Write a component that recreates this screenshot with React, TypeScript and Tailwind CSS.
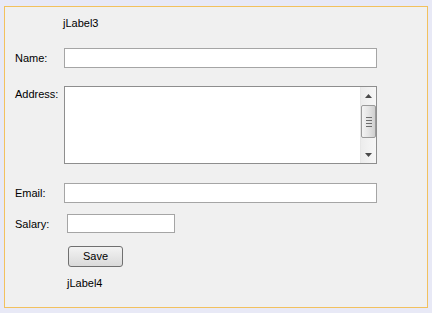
const font = { fontFamily: '"Liberation Sans", Arial, sans-serif' }

const FieldLabel = ({ text, className = '' }: { text: string; className?: string }) => (
  <span className={`w-[49px] shrink-0 text-[11px] leading-[14px] text-black ${className}`}>{text}</span>
)

const Scrollbar = () => (
  <div className="flex h-full w-[16px] shrink-0 flex-col border-l border-[#e6e6e6] bg-gradient-to-r from-[#ececec] to-[#f7f7f7]">
    <div className="flex h-[17px] items-center justify-center">
      <svg width="7" height="4" viewBox="0 0 7 4"><path d="M0 4 L3.5 0 L7 4 Z" fill="#4a4a4a" /></svg>
    </div>
    <div className="mt-[1px] flex h-[33px] flex-col items-center justify-center gap-[2px] rounded-[2px] border border-[#9a9a9a] bg-gradient-to-r from-[#f4f4f4] via-[#e4e4e4] to-[#cfcfcf]">
      <div className="h-px w-[6px] bg-[#6e6e6e]" />
      <div className="h-px w-[6px] bg-[#6e6e6e]" />
      <div className="h-px w-[6px] bg-[#6e6e6e]" />
      <div className="h-px w-[6px] bg-[#6e6e6e]" />
    </div>
    <div className="flex-1" />
    <div className="flex h-[17px] items-center justify-center">
      <svg width="7" height="4" viewBox="0 0 7 4"><path d="M0 0 L7 0 L3.5 4 Z" fill="#4a4a4a" /></svg>
    </div>
  </div>
)

export default function App() {
  return (
    <div className="h-[313px] w-[432px] bg-[#e8e9f6] pl-[4px] pt-[6px]" style={font}>
      <div className="flex h-[302px] w-[424px] flex-col border border-[#f2c15e] bg-[#f0f0f0] pl-[10px]">
        <span className="ml-[48px] mt-[9px] text-[11px] leading-[14px] text-black">jLabel3</span>

        <div className="mt-[18px] flex h-[20px] items-center">
          <FieldLabel text="Name:" />
          <div className="h-full w-[313px] shrink-0 border border-[#a5a5a5] bg-white" />
        </div>

        <div className="mt-[18px] flex h-[78px] items-start">
          <FieldLabel text="Address:" className="pt-[1px]" />
          <div className="flex h-full w-[313px] shrink-0 border border-[#8e8e8e] bg-white">
            <div className="flex-1" />
            <Scrollbar />
          </div>
        </div>

        <div className="mt-[19px] flex h-[20px] items-center">
          <FieldLabel text="Email:" />
          <div className="h-full w-[313px] shrink-0 border border-[#a5a5a5] bg-white" />
        </div>

        <div className="mt-[11px] flex h-[19px] items-center">
          <FieldLabel text="Salary:" />
          <div className="ml-[3px] h-full w-[108px] shrink-0 border border-[#a5a5a5] bg-white" />
        </div>

        <button className="ml-[53px] mt-[13px] flex h-[21px] w-[55px] items-center justify-center rounded-[3px] border border-[#707070] bg-gradient-to-b from-[#f3f3f3] to-[#dadada] text-[11px] leading-none text-black">
          Save
        </button>

        <span className="ml-[52px] mt-[9px] text-[11px] leading-[14px] text-black">jLabel4</span>
      </div>
    </div>
  )
}
